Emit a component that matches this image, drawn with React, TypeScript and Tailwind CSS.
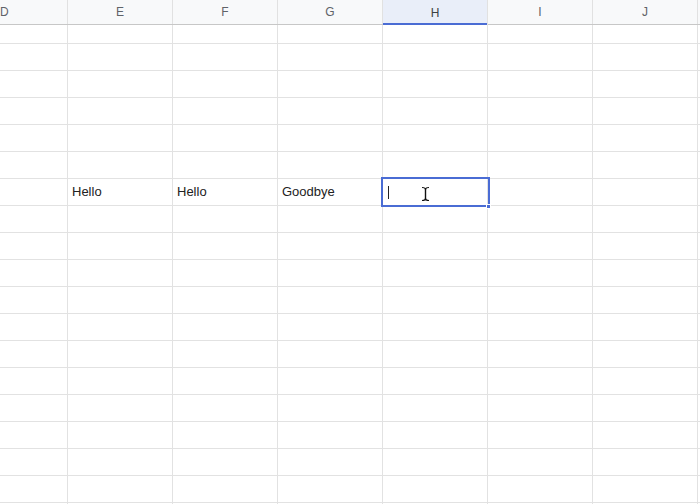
import React from 'react';

const columns = ['D', 'E', 'F', 'G', 'H', 'I', 'J'];
const ROW_COUNT = 19;
const DATA_ROW = 6;
const data: Record<string, string> = { E: 'Hello', F: 'Hello', G: 'Goodbye' };

const IBeam: React.FC = () => (
  <svg width="9" height="16" viewBox="0 0 9 16" className="block">
    <path d="M1 1.5 C3 1.5 4.5 2 4.5 3.5 C4.5 2 6 1.5 8 1.5" stroke="#fff" strokeWidth="3" fill="none" />
    <path d="M1 14.5 C3 14.5 4.5 14 4.5 12.5 C4.5 14 6 14.5 8 14.5" stroke="#fff" strokeWidth="3" fill="none" />
    <line x1="4.5" y1="3" x2="4.5" y2="13" stroke="#fff" strokeWidth="3" />
    <path d="M1 1.5 C3 1.5 4.5 2 4.5 3.5 C4.5 2 6 1.5 8 1.5" stroke="#111" strokeWidth="1.2" fill="none" />
    <path d="M1 14.5 C3 14.5 4.5 14 4.5 12.5 C4.5 14 6 14.5 8 14.5" stroke="#111" strokeWidth="1.2" fill="none" />
    <line x1="4.5" y1="3" x2="4.5" y2="13" stroke="#111" strokeWidth="1.4" />
  </svg>
);

export default function App() {
  return (
    <div className="w-[700px] h-[504px] overflow-hidden bg-white font-['Liberation_Sans',Arial,sans-serif]">
      <div className="ml-[-37px] flex flex-col">
        {/* column header */}
        <div className="flex h-[25px] bg-[#f8f9fa] border-b border-[#c7c7c7]">
          {columns.map(c => (
            <div
              key={c}
              className={`w-[105px] shrink-0 flex items-center border-r border-[#e1e1e1] text-[12px] ${
                c === 'D' ? 'justify-start pl-[37px]' : 'justify-center'
              } ${c === 'H' ? 'bg-[#e9eef9] text-[#3c4043] shadow-[inset_0_-2px_0_#4a6cd4] mb-[-1px]' : 'text-[#5f6368]'}`}
            >
              {c}
            </div>
          ))}
        </div>

        {/* rows */}
        {Array.from({ length: ROW_COUNT }).map((_, r) => (
          <div key={r} className={`flex border-b border-[#e2e2e2] ${r === 0 ? 'h-[19px]' : 'h-[27px]'}`}>
            {columns.map(c => {
              const active = r === DATA_ROW && c === 'H';
              return (
                <div
                  key={c}
                  className={`w-[105px] shrink-0 border-r border-[#e2e2e2] flex items-center pl-[4px] text-[13px] text-[#222] ${
                    active ? 'relative z-10 outline-2 outline-[#4a6cd4] bg-white' : ''
                  }`}
                >
                  {r === DATA_ROW && data[c]}
                  {active && (
                    <>
                      <span className="ml-[1px] w-[1px] h-[13px] bg-[#222]" />
                      <span className="ml-[32px] mt-[4px]">
                        <IBeam />
                      </span>
                      <span className="absolute right-[-4px] bottom-[-4px] w-[5px] h-[5px] bg-[#4a6cd4] border border-white" />
                    </>
                  )}
                </div>
              );
            })}
          </div>
        ))}
      </div>
    </div>
  );
}
